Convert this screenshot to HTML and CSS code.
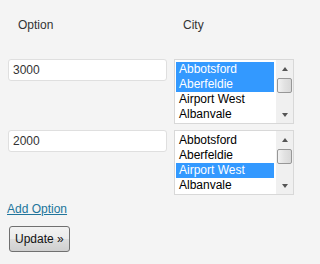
FILE: index.html
```html
<!DOCTYPE html>
<html>
<head>
<meta charset="utf-8">
<link rel="stylesheet" href="styles.css">
</head>
<body>
<form class="form">
  <div class="grid">
    <div class="head head-option">Option</div>
    <div class="head head-city">City</div>

    <input class="text" type="text" value="3000">
    <div class="listbox" role="listbox" aria-multiselectable="true">
      <div class="list">
        <div class="opt sel">Abbotsford</div>
        <div class="opt sel">Aberfeldie</div>
        <div class="opt">Airport West</div>
        <div class="opt">Albanvale</div>
      </div>
      <div class="sbar">
        <div class="sbtn"><span class="arr up"></span></div>
        <div class="thumb"></div>
        <div class="track"></div>
        <div class="sbtn"><span class="arr down"></span></div>
      </div>
    </div>

    <input class="text" type="text" value="2000">
    <div class="listbox" role="listbox" aria-multiselectable="true">
      <div class="list">
        <div class="opt">Abbotsford</div>
        <div class="opt">Aberfeldie</div>
        <div class="opt sel">Airport West</div>
        <div class="opt">Albanvale</div>
      </div>
      <div class="sbar">
        <div class="sbtn"><span class="arr up"></span></div>
        <div class="thumb"></div>
        <div class="track"></div>
        <div class="sbtn"><span class="arr down"></span></div>
      </div>
    </div>
  </div>
  <a class="add" href="#">Add Option</a>
  <button class="btn" type="button">Update &raquo;</button>
</form>
</body>
</html>
```

FILE: styles.css
```css
html, body {
  margin: 0;
  padding: 0;
  background: #f4f4f4;
}
body {
  font-family: "Liberation Sans", Arial, sans-serif;
  font-size: 12px;
  line-height: 15px;
  color: #222;
}
.form {
  padding: 18px 0 0 7px;
  display: flex;
  flex-direction: column;
  align-items: flex-start;
}
.grid {
  margin-left: 1px;
  display: grid;
  grid-template-columns: 159px 120px;
  column-gap: 7px;
  row-gap: 6px;
  align-items: start;
}
.head {
  color: #333;
  height: 15px;
  margin-bottom: 20px;
}
.head-option { padding-left: 10px; }
.head-city { padding-left: 9px; }
.text {
  box-sizing: border-box;
  width: 159px;
  height: 22px;
  margin: 0;
  padding: 3px 4px;
  border: 1px solid #dfdfdf;
  border-radius: 3px;
  background: #fff;
  font: 12px/15px "Liberation Sans", Arial, sans-serif;
  color: #333;
  outline: none;
}
.listbox {
  box-sizing: border-box;
  width: 120px;
  height: 65px;
  border: 1px solid #d8d8d8;
  background: #fff;
  display: flex;
}
.list {
  flex: 1;
  padding: 2px 2px 1px 1px;
}
.opt {
  height: 15px;
  padding-left: 3px;
  color: #000;
  white-space: nowrap;
}
.opt.sel {
  background: #3399ff;
  color: #fff;
}
.sbar {
  width: 17px;
  background: #f0f0f0;
  display: flex;
  flex-direction: column;
}
.sbtn {
  height: 17px;
  display: flex;
  align-items: center;
  justify-content: center;
}
.arr {
  width: 0;
  height: 0;
  border-left: 3.5px solid transparent;
  border-right: 3.5px solid transparent;
}
.arr.up { border-bottom: 4px solid #555; }
.arr.down { border-top: 4px solid #555; }
.thumb {
  box-sizing: border-box;
  height: 15px;
  margin: 1px 1px 0 1px;
  border: 1px solid #979797;
  border-radius: 2px;
  background: linear-gradient(to right, #f2f2f2, #e2e2e2 50%, #d8d8d8);
}
.track { flex: 1; }
.add {
  margin-top: 7px;
  color: #21759b;
  text-decoration: underline;
}
.btn {
  margin: 9px 0 0 2px;
  box-sizing: border-box;
  height: 26px;
  padding: 0 5px;
  border: 1px solid #707070;
  border-radius: 3px;
  background: linear-gradient(#f2f2f2, #ebebeb 50%, #dddddd 51%, #cfcfcf);
  font: 12px/15px "Liberation Sans", Arial, sans-serif;
  color: #111;
}
```
